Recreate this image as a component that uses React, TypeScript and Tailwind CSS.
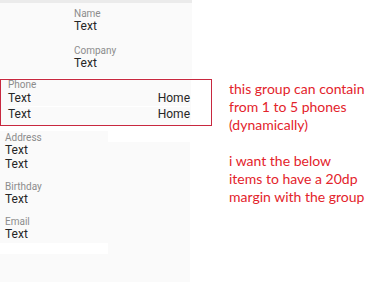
import React from 'react';

const label = 'text-[10px] leading-[11px] text-[#8c8c8c]';
const value = 'text-[12px] leading-[14px] text-[#262626]';

const Field: React.FC<{ title: string; lines: string[]; className?: string }> = ({ title, lines, className }) => (
  <div className={className}>
    <div className={label}>{title}</div>
    {lines.map((l, i) => (
      <div key={i} className={value}>{l}</div>
    ))}
  </div>
);

const App: React.FC = () => {
  const phones = ['Text', 'Text'];

  return (
    <div className="w-[378px] h-[292px] bg-white flex" style={{ fontFamily: 'Roboto, "Noto Sans", sans-serif' }}>
      <div className="w-[212px] flex flex-col">
        {/* name + company */}
        <div className="w-[192px] h-[78px] bg-[#fafafa] border-t-[3px] border-t-[#ebebeb] pl-[74px] pt-[5px]">
          <Field title="Name" lines={['Text']} />
          <Field title="Company" lines={['Text']} className="mt-[12px]" />
        </div>

        {/* phone group (red frame) */}
        <div className="mt-[1px] h-[47px] p-[1px] bg-[#c8283f]">
          <div className="h-full bg-white">
            <div className="w-[190px] h-full bg-[#fafafa] pl-[7px] pr-[1px]">
              <div className="text-[10px] leading-[10px] text-[#8c8c8c]">Phone</div>
              {phones.map((p, i) => (
                <div
                  key={i}
                  className={
                    i === 0
                      ? 'flex justify-between text-[12px] leading-[16px] text-[#262626]'
                      : 'flex justify-between text-[12px] leading-[15px] text-[#262626] border-t border-t-white'
                  }
                >
                  <span>{p}</span>
                  <span>Home</span>
                </div>
              ))}
            </div>
          </div>
        </div>

        {/* address, birthday, email */}
        <div className="w-[190px] flex">
          <div className="w-[108px] flex flex-col">
            <div className="mt-[5px] h-[112px] bg-[#fafafa] pl-[5px] pt-[1px]">
              <Field title="Address" lines={['Text', 'Text']} />
              <Field title="Birthday" lines={['Text']} className="mt-[10px]" />
              <Field title="Email" lines={['Text']} className="mt-[10px]" />
            </div>
            <div className="h-[11px] bg-white" />
            <div className="h-[28px] bg-[#fafafa]" />
          </div>
          <div className="flex-1 mt-[16px] h-[140px] bg-[#fafafa]" />
        </div>
      </div>

      <div
        className="pl-[17px] pt-[80px] text-[14px] leading-[18px] text-[#e3232b]"
        style={{ fontFamily: 'Lato, "Open Sans", sans-serif' }}
      >
        <div>this group can contain</div>
        <div>from 1 to 5 phones</div>
        <div>(dynamically)</div>
        <div className="h-[18px]" />
        <div>i want the below</div>
        <div>items to have a 20dp</div>
        <div>margin with the group</div>
      </div>
    </div>
  );
};

export default App;
